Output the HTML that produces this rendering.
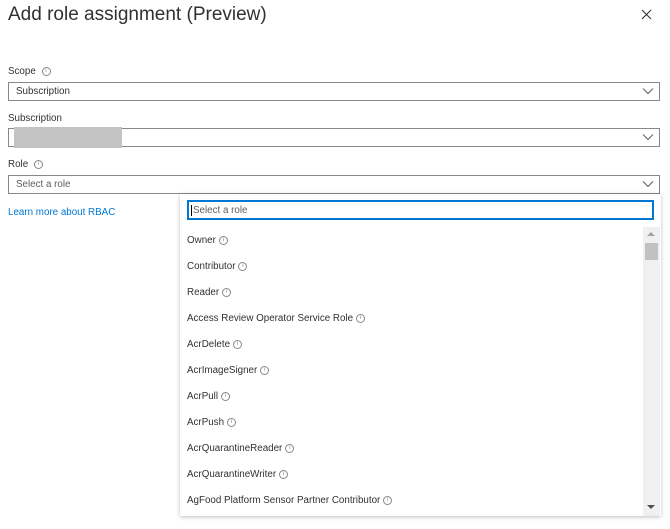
<!DOCTYPE html>
<html><head><meta charset="utf-8"><style>
*{box-sizing:border-box;margin:0;padding:0}
body{width:670px;height:529px;background:#fff;font-family:"Liberation Sans",sans-serif;color:#323130;position:relative;overflow:hidden}
.a{position:absolute}
.title{left:8px;top:4px;font-size:19px;color:#323130}
.lbl{font-size:9.8px;left:8px}
.box{left:8px;width:652px;height:19px;border:1px solid #8a8886;font-size:9.8px;padding-left:7px;line-height:18px}
.chev{position:absolute;right:5px;top:4px}
.info{display:inline-block;width:9px;height:9px;border:1px solid #8a8886;border-radius:50%;font-size:6px;line-height:7px;text-align:center;color:#8a8886;vertical-align:1px;margin-left:3px;position:relative;top:-1px}
.item{left:187px;font-size:9.8px;color:#323130;line-height:12px}
</style></head><body>
<div class="a title">Add role assignment (Preview)</div>
<svg class="a" style="left:641px;top:9px" width="11" height="11"><path d="M1 1L10 10M10 1L1 10" stroke="#323130" stroke-width="1.1"/></svg>
<div class="a lbl" style="top:66px">Scope <span class="info">i</span></div>
<div class="a box" style="top:82px">Subscription<svg class="chev" width="12" height="8"><path d="M1 1.5L6 6.5L11 1.5" stroke="#605e5c" fill="none"/></svg></div>
<div class="a lbl" style="top:113px">Subscription</div>
<div class="a box" style="top:128px"><svg class="chev" width="12" height="8"><path d="M1 1.5L6 6.5L11 1.5" stroke="#605e5c" fill="none"/></svg></div>
<div class="a" style="left:14px;top:127px;width:108px;height:21px;background:#c3c3c3"></div>
<div class="a lbl" style="top:159px">Role <span class="info">i</span></div>
<div class="a box" style="top:175px;color:#605e5c">Select a role<svg class="chev" width="12" height="8"><path d="M1 1.5L6 6.5L11 1.5" stroke="#605e5c" fill="none"/></svg></div>
<div class="a" style="left:8px;top:207px;font-size:9.8px;color:#0078d4">Learn more about RBAC</div>
<div class="a" style="left:180px;top:194px;width:481px;height:322px;background:#fff;box-shadow:0 1px 4px rgba(0,0,0,.25)"></div>
<div class="a" style="left:187px;top:200px;width:467px;height:20px;border:2px solid #0078d4;font-size:9.8px;line-height:17px;padding-left:4px;color:#605e5c"><span style="border-left:1px solid #000;margin-left:-2px;padding-left:1px">Select a role</span></div>
<div class="a" style="left:643px;top:227px;width:17px;height:289px;background:#f0f0f0"></div>
<div class="a" style="left:645px;top:243px;width:13px;height:17px;background:#c1c1c1"></div>
<svg class="a" style="left:647px;top:232px" width="8" height="5"><path d="M0 4L4 0L8 4Z" fill="#a3a3a3"/></svg>
<svg class="a" style="left:647px;top:505px" width="8" height="5"><path d="M0 0L8 0L4 4Z" fill="#505050"/></svg>
<div class="a item" style="top:235px">Owner<span class="info">i</span></div>
<div class="a item" style="top:261px">Contributor<span class="info">i</span></div>
<div class="a item" style="top:287px">Reader<span class="info">i</span></div>
<div class="a item" style="top:313px">Access Review Operator Service Role<span class="info">i</span></div>
<div class="a item" style="top:339px">AcrDelete<span class="info">i</span></div>
<div class="a item" style="top:365px">AcrImageSigner<span class="info">i</span></div>
<div class="a item" style="top:391px">AcrPull<span class="info">i</span></div>
<div class="a item" style="top:417px">AcrPush<span class="info">i</span></div>
<div class="a item" style="top:443px">AcrQuarantineReader<span class="info">i</span></div>
<div class="a item" style="top:469px">AcrQuarantineWriter<span class="info">i</span></div>
<div class="a item" style="top:495px">AgFood Platform Sensor Partner Contributor<span class="info">i</span></div>
</body></html>
